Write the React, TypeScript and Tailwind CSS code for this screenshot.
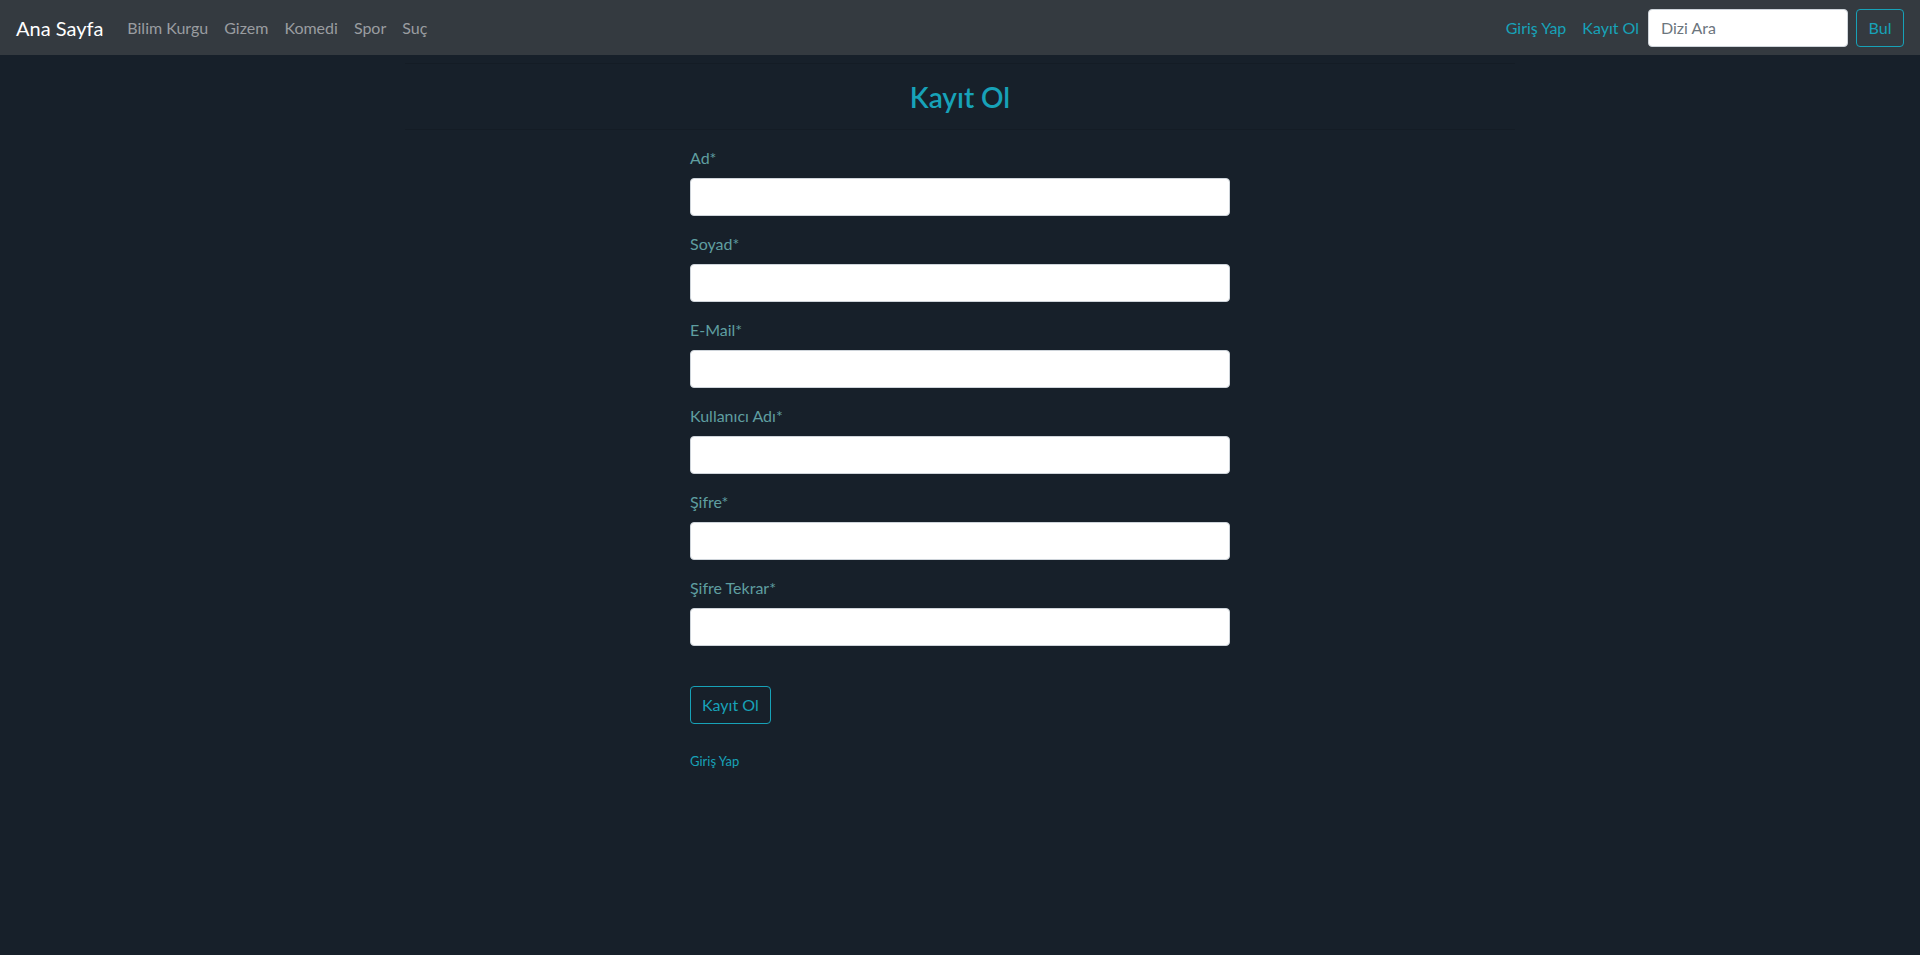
import React from 'react';

const font = { fontFamily: '"Segoe UI", Lato, "Noto Sans", sans-serif' };

const fields = ['Ad*', 'Soyad*', 'E-Mail*', 'Kullanıcı Adı*', 'Şifre*', 'Şifre Tekrar*'];

const categories = ['Bilim Kurgu', 'Gizem', 'Komedi', 'Spor', 'Suç'];

function Navbar() {
  return (
    <nav className="flex h-[55px] items-center justify-between bg-[#343a40] px-4">
      <div className="flex items-center">
        <a href="#" className="mr-4 text-[20px] leading-[30px] text-white">
          Ana Sayfa
        </a>
        <ul className="flex">
          {categories.map(cat => (
            <li key={cat}>
              <a href="#" className="block px-2 py-2 text-[16px] leading-6 text-[#9a9da0]">
                {cat}
              </a>
            </li>
          ))}
        </ul>
      </div>
      <div className="flex items-center">
        <a href="#" className="px-2 py-2 text-[16px] leading-6 text-[#17a2b8]">
          Giriş Yap
        </a>
        <a href="#" className="px-2 py-2 text-[16px] leading-6 text-[#17a2b8]">
          Kayıt Ol
        </a>
        <form className="ml-px flex items-center" onSubmit={e => e.preventDefault()}>
          <input
            type="search"
            placeholder="Dizi Ara"
            className="mr-2 h-[38px] w-[200px] rounded border border-[#ced4da] bg-white px-3 text-[16px] text-[#495057] outline-none placeholder:text-[#6c757d]"
            style={font}
          />
          <button
            type="submit"
            className="h-[38px] w-[48px] rounded border border-[#17a2b8] text-[16px] text-[#17a2b8]"
            style={font}
          >
            Bul
          </button>
        </form>
      </div>
    </nav>
  );
}

export default function App() {
  return (
    <div className="min-h-screen bg-[#17202a]" style={font}>
      <Navbar />
      <main className="mx-auto w-[1140px] px-[15px]">
        {/* page title between two faint rules */}
        <div className="mt-2 border-y border-black/10 pt-[16px] pb-[14px]">
          <h2 className="text-center text-[28px] leading-[35px] font-semibold text-[#17a2b8]">
            Kayıt Ol
          </h2>
        </div>

        <form className="mx-auto mt-4 w-[540px]" onSubmit={e => e.preventDefault()}>
          {fields.map(label => (
            <div key={label} className="mb-4">
              <label className="mb-2 block text-[16px] leading-6 text-[#5f9ea0]">{label}</label>
              <input
                type={label.startsWith('Şifre') ? 'password' : 'text'}
                className="block h-[38px] w-full rounded border border-[#ced4da] bg-white px-3 text-[16px] text-[#495057] outline-none"
              />
            </div>
          ))}
          <div className="h-6" />
          <button
            type="submit"
            className="h-[38px] rounded border border-[#17a2b8] px-[11px] text-[16px] text-[#17a2b8]"
            style={font}
          >
            Kayıt Ol
          </button>
          <div className="mt-[28px] text-[13px] leading-[19px]">
            <a href="#" className="text-[#17a2b8]">
              Giriş Yap
            </a>
          </div>
        </form>
      </main>
    </div>
  );
}
